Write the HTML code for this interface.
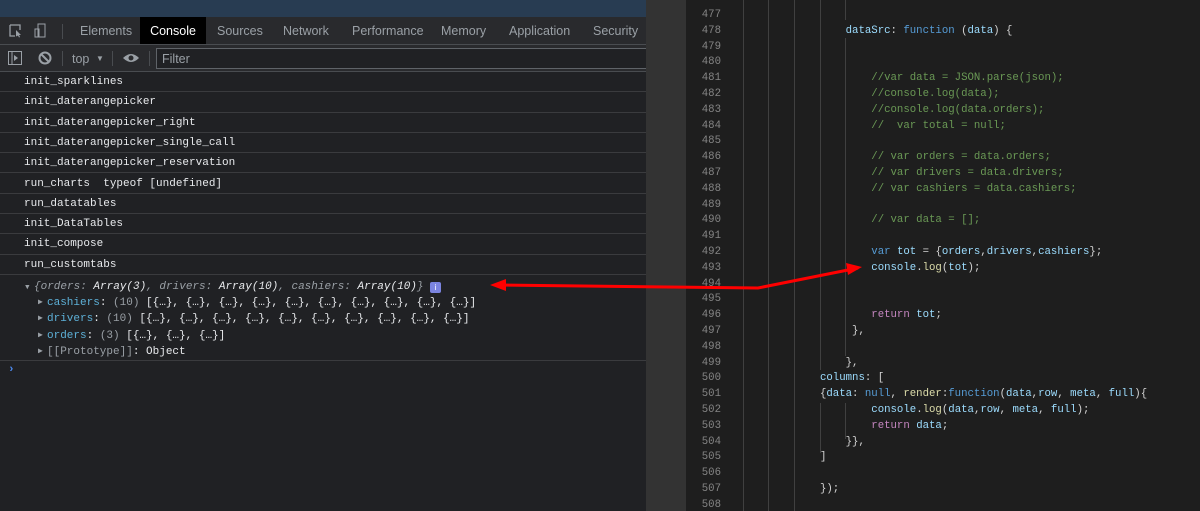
<!DOCTYPE html>
<html><head><meta charset="utf-8"><style>
*{margin:0;padding:0;box-sizing:border-box}
body{width:1200px;height:511px;overflow:hidden;background:#1e1e1e;position:relative;font-family:"Liberation Sans",sans-serif}
.abs{position:absolute}
#left{left:0;top:0;width:646px;height:511px;background:#202124}
#topbar{left:0;top:0;width:646px;height:17px;background:#283c52}
#tabs{left:0;top:17px;width:646px;height:28px;background:#292a2d;border-bottom:1px solid #494c50}
.tab{position:absolute;top:0;height:27px;line-height:28px;font-size:12.5px;color:#9aa0a6}
#tb{left:0;top:45px;width:646px;height:27px;background:#292a2d;border-bottom:1px solid #494c50}
.row{position:absolute;left:0;width:646px;height:20.3px;border-bottom:1px solid #3a3b3e;font-family:"Liberation Mono",monospace;font-size:11px;color:#e8eaed;line-height:21px;padding-left:24px;white-space:pre}
.m{font-family:"Liberation Mono",monospace;font-size:11px;position:absolute;white-space:pre;color:#e8eaed}
#strip{left:646px;top:0;width:40px;height:511px;background:#333333}
.ln{position:absolute;left:690px;width:31px;text-align:right;font-family:"Liberation Mono",monospace;font-size:10.7px;color:#858585}
.cl{position:absolute;left:743px;font-family:"Liberation Mono",monospace;font-size:10.7px;color:#d4d4d4;white-space:pre}
.g{position:absolute;width:1px;background:#404040}
.c{color:#6a9955}.k{color:#569cd6}.v{color:#9cdcfe}.f{color:#dcdcaa}.r{color:#c586c0}
</style></head><body>
<div id="left" class="abs"></div>
<div id="topbar" class="abs"></div>
<div id="tabs" class="abs">
<svg class="abs" style="left:9px;top:7px" width="14" height="14"><path d="M1 1h10v5M1 1v11h5" stroke="#9aa0a6" fill="none" stroke-width="1.3"/><path d="M7 6l5 5-2 0 1 2-1 .5-1-2-2 1z" fill="#9aa0a6"/></svg>
<svg class="abs" style="left:33px;top:6px" width="14" height="16"><rect x="2" y="6" width="4" height="8" stroke="#9aa0a6" fill="none"/><rect x="5" y="1" width="7" height="13" stroke="#9aa0a6" fill="none"/></svg>
<div class="abs" style="left:62px;top:7px;width:1px;height:15px;background:#494c50"></div>
<div class="tab" style="left:80px">Elements</div>
<div class="tab" style="left:140px;width:66px;background:#000;color:#fff;text-align:center;top:0">Console</div>
<div class="tab" style="left:217px">Sources</div>
<div class="tab" style="left:283px">Network</div>
<div class="tab" style="left:352px">Performance</div>
<div class="tab" style="left:441px">Memory</div>
<div class="tab" style="left:509px">Application</div>
<div class="tab" style="left:593px">Security</div>
</div>
<div id="tb" class="abs">
<svg class="abs" style="left:8px;top:6px" width="14" height="14"><rect x="0.5" y="0.5" width="13" height="13" stroke="#9aa0a6" fill="none"/><line x1="4" y1="1" x2="4" y2="13" stroke="#9aa0a6"/><path d="M6 4l4 3-4 3z" fill="#9aa0a6"/></svg>
<svg class="abs" style="left:38px;top:6px" width="14" height="14"><circle cx="7" cy="7" r="5.5" stroke="#9aa0a6" stroke-width="2" fill="none"/><line x1="3" y1="3" x2="11" y2="11" stroke="#9aa0a6" stroke-width="2"/></svg>
<div class="abs" style="left:62px;top:6px;width:1px;height:15px;background:#494c50"></div>
<div class="abs" style="left:72px;top:7px;font-size:12.5px;color:#9aa0a6">top</div>
<div class="abs" style="left:96px;top:9px;font-size:8px;color:#9aa0a6">▼</div>
<div class="abs" style="left:112px;top:6px;width:1px;height:15px;background:#494c50"></div>
<svg class="abs" style="left:122px;top:7px" width="18" height="12"><path d="M1 6Q9-2 17 6Q9 14 1 6z" fill="#9aa0a6"/><circle cx="9" cy="6" r="2.5" fill="#292a2d"/></svg>
<div class="abs" style="left:149px;top:6px;width:1px;height:15px;background:#494c50"></div>
<div class="abs" style="left:156px;top:3px;width:490px;height:21px;border:1px solid #5f6368;border-right:none;background:#202124;font-size:12.5px;color:#9aa0a6;padding:3px 0 0 5px">Filter</div>
</div>
<div class="row" style="top:72px">init_sparklines</div>
<div class="row" style="top:92.3px">init_daterangepicker</div>
<div class="row" style="top:112.6px">init_daterangepicker_right</div>
<div class="row" style="top:132.9px">init_daterangepicker_single_call</div>
<div class="row" style="top:153.2px">init_daterangepicker_reservation</div>
<div class="row" style="top:173.5px">run_charts  typeof [undefined]</div>
<div class="row" style="top:193.8px">run_datatables</div>
<div class="row" style="top:214.1px">init_DataTables</div>
<div class="row" style="top:234.4px">init_compose</div>
<div class="row" style="top:254.7px">run_customtabs</div>
<div class="abs" style="left:0;top:360px;width:646px;height:1px;background:#3a3b3e"></div>
<div class="m" style="left:24px;top:280px;color:#9aa0a6">▾</div>
<div class="m" style="left:34px;top:281px;font-style:italic;color:#9aa0a6">{orders: <span style="color:#e8eaed">Array(3)</span>, drivers: <span style="color:#e8eaed">Array(10)</span>, cashiers: <span style="color:#e8eaed">Array(10)</span>}</div>
<div class="abs" style="left:430px;top:282px;width:11px;height:11px;background:#7b84e0;border-radius:2px;color:#fff;font-size:8px;text-align:center;line-height:11px">i</div>
<div class="m" style="left:38px;top:297px;color:#9aa0a6;font-size:8px">▶</div>
<div class="m" style="left:47px;top:297px"><span style="color:#5db0d7">cashiers</span>: <span style="color:#9aa0a6">(10)</span> [{…}, {…}, {…}, {…}, {…}, {…}, {…}, {…}, {…}, {…}]</div>
<div class="m" style="left:38px;top:313px;color:#9aa0a6;font-size:8px">▶</div>
<div class="m" style="left:47px;top:313px"><span style="color:#5db0d7">drivers</span>: <span style="color:#9aa0a6">(10)</span> [{…}, {…}, {…}, {…}, {…}, {…}, {…}, {…}, {…}, {…}]</div>
<div class="m" style="left:38px;top:330px;color:#9aa0a6;font-size:8px">▶</div>
<div class="m" style="left:47px;top:330px"><span style="color:#5db0d7">orders</span>: <span style="color:#9aa0a6">(3)</span> [{…}, {…}, {…}]</div>
<div class="m" style="left:38px;top:346px;color:#9aa0a6;font-size:8px">▶</div>
<div class="m" style="left:47px;top:346px"><span style="color:#9aa0a6">[[Prototype]]</span>: Object</div>
<div class="m" style="left:8px;top:364px;color:#4e8ef7;font-weight:bold">›</div>
<div id="strip" class="abs"></div>
<div class="g" style="left:743px;top:0;height:511px"></div>
<div class="g" style="left:768px;top:0;height:511px"></div>
<div class="g" style="left:794px;top:0;height:511px"></div>
<div class="g" style="left:820px;top:0;height:370px"></div>
<div class="g" style="left:820px;top:403px;height:50px"></div>
<div class="g" style="left:845px;top:0;height:20px"></div>
<div class="g" style="left:845px;top:38px;height:318px"></div>
<div class="g" style="left:845px;top:403px;height:36px"></div>
<div id="code"></div>
<svg class="abs" style="left:0;top:0" width="1200" height="511"><path d="M500 285L758 288L858 268" stroke="#f00" stroke-width="3" fill="none"/><path d="M490 285l16-6v12z" fill="#f00"/><path d="M862 267l-16-4 2 12z" fill="#f00"/></svg>
<script>
var L=[
[477,''],[478,'            <span class="v">dataSrc</span>: <span class="k">function</span> (<span class="v">data</span>) {'],[479,''],[480,''],
[481,'                <span class="c">//var data = JSON.parse(json);</span>'],[482,'                <span class="c">//console.log(data);</span>'],
[483,'                <span class="c">//console.log(data.orders);</span>'],[484,'                <span class="c">//  var total = null;</span>'],[485,''],
[486,'                <span class="c">// var orders = data.orders;</span>'],[487,'                <span class="c">// var drivers = data.drivers;</span>'],
[488,'                <span class="c">// var cashiers = data.cashiers;</span>'],[489,''],[490,'                <span class="c">// var data = [];</span>'],[491,''],
[492,'                <span class="k">var</span> <span class="v">tot</span> = {<span class="v">orders</span>,<span class="v">drivers</span>,<span class="v">cashiers</span>};'],
[493,'                <span class="v">console</span>.<span class="f">log</span>(<span class="v">tot</span>);'],[494,''],[495,''],
[496,'                <span class="r">return</span> <span class="v">tot</span>;'],[497,'             },'],[498,''],[499,'            },'],
[500,'        <span class="v">columns</span>: ['],
[501,'        {<span class="v">data</span>: <span class="k">null</span>, <span class="f">render</span>:<span class="k">function</span>(<span class="v">data</span>,<span class="v">row</span>, <span class="v">meta</span>, <span class="v">full</span>){'],
[502,'                <span class="v">console</span>.<span class="f">log</span>(<span class="v">data</span>,<span class="v">row</span>, <span class="v">meta</span>, <span class="v">full</span>);'],
[503,'                <span class="r">return</span> <span class="v">data</span>;'],[504,'            }},'],[505,'        ]'],[506,''],[507,'        });'],[508,'']];
var h='';L.forEach(function(l,i){var t=(9+i*15.8).toFixed(1);var s=l[1]?'    '+l[1]:'';h+='<div class="ln" style="top:'+t+'px">'+l[0]+'</div><div class="cl" style="top:'+t+'px">'+s+'</div>';});
document.getElementById('code').innerHTML=h;
</script>
</body></html>
